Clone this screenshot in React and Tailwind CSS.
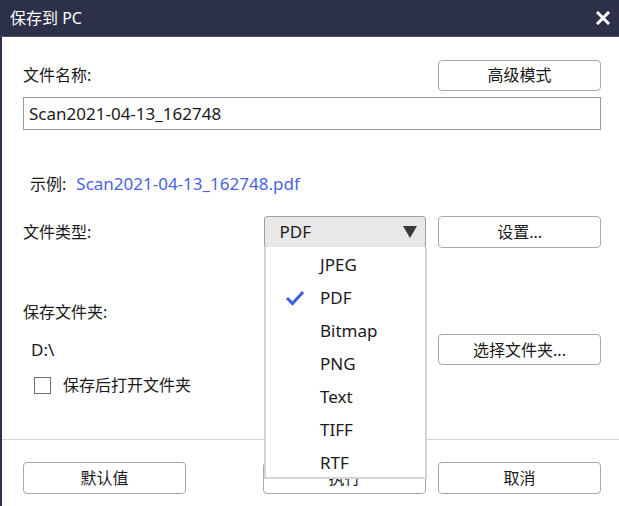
import React from "react";

function Btn({ children, className = "" }) {
  return (
    <div
      className={
        "flex items-center justify-center rounded-[4px] border border-[#a8a8a8] bg-white text-[16px] text-[#1a1a1a] " +
        className
      }
    >
      {children}
    </div>
  );
}

export default function App() {
  const items = ["JPEG", "PDF", "Bitmap", "PNG", "Text", "TIFF", "RTF"];
  return (
    <div className="relative w-[619px] h-[506px] overflow-hidden bg-white font-['Noto_Sans','Noto_Sans_CJK_SC',sans-serif] text-[#1a1a1a]">
      {/* title bar */}
      <div className="flex h-[37px] items-center justify-between border-b border-[#4b5068] bg-[#2c3049] pl-[10px] pr-[9px]">
        <span className="text-[16px] text-white">保存到 PC</span>
        <svg width="14" height="14" viewBox="0 0 14 14">
          <path d="M2 2 L12 12 M12 2 L2 12" stroke="white" strokeWidth="3" strokeLinecap="square" />
        </svg>
      </div>

      <div className="flex h-[469px] flex-col border-l-2 border-[#2c3049]">
        <div className="flex flex-col pl-[21px] pr-[18px]">
          {/* row 1 */}
          <div className="mt-[23px] flex h-[30px] items-center justify-between">
            <span className="text-[16px] leading-none">文件名称:</span>
            <Btn className="h-[31px] w-[163px]">高级模式</Btn>
          </div>
          {/* input */}
          <div className="mt-[7px] flex h-[33px] items-center border border-[#9a9a9a] bg-white pl-[5px] text-[17px]">
            Scan2021-04-13_162748
          </div>
          {/* example */}
          <div className="mt-[44px] flex h-[20px] items-center pl-[7px]">
            <span className="text-[16px]">示例:</span>
            <span className="ml-[10px] text-[17px] text-[#4a63e6]">Scan2021-04-13_162748.pdf</span>
          </div>
          {/* file type */}
          <div className="mt-[22px] flex h-[32px] items-center">
            <span className="w-[241px] text-[16px]">文件类型:</span>
            <div className="flex h-[32px] w-[163px] items-center justify-between rounded-[3px] border border-[#a0a0a0] bg-[#e8e8e8] pl-[15px] pr-[8px] text-[17px]">
              <span>PDF</span>
              <svg width="14" height="12" viewBox="0 0 14 12">
                <path d="M0 0 H14 L7 12 Z" fill="#3a3a3a" />
              </svg>
            </div>
            <Btn className="ml-[12px] h-[32px] w-[163px]">设置...</Btn>
          </div>
          {/* save folder */}
          <div className="mt-[54px] flex h-[20px] items-center text-[16px]">保存文件夹:</div>
          <div className="mt-[12px] flex h-[31px] items-center justify-between">
            <span className="pl-[8px] text-[17px]">D:\</span>
            <Btn className="h-[31px] w-[163px]">选择文件夹...</Btn>
          </div>
          {/* checkbox */}
          <div className="mt-[11px] flex h-[18px] items-center pl-[11px]">
            <div className="h-[17px] w-[17px] border border-[#6e6e6e] bg-white" />
            <span className="ml-[12px] text-[16px]">保存后打开文件夹</span>
          </div>
        </div>

        {/* separator */}
        <div className="mt-[45px] h-px w-full bg-[#d6d6d6]" />

        {/* bottom buttons */}
        <div className="mt-[22px] flex h-[32px] items-center pl-[21px] pr-[18px]">
          <Btn className="h-[32px] w-[163px]">默认值</Btn>
          <Btn className="ml-[77px] h-[32px] w-[163px]">执行</Btn>
          <Btn className="ml-[12px] h-[32px] w-[163px]">取消</Btn>
        </div>
      </div>

      {/* dropdown list */}
      <div className="absolute left-[264px] top-[247px] flex h-[232px] w-[163px] flex-col border-2 border-t-0 border-[#d4d4d4] bg-white pt-[1px]">
        {items.map((it) => (
          <div key={it} className="relative flex h-[33px] shrink-0 items-center pl-[54px] text-[17px]">
            {it === "PDF" && (
              <svg className="absolute left-[19px] top-[9px]" width="20" height="16" viewBox="0 0 20 16">
                <path d="M2 8 L7.5 13.5 L18 2" fill="none" stroke="#3d5ce8" strokeWidth="3" />
              </svg>
            )}
            {it}
          </div>
        ))}
      </div>
    </div>
  );
}
